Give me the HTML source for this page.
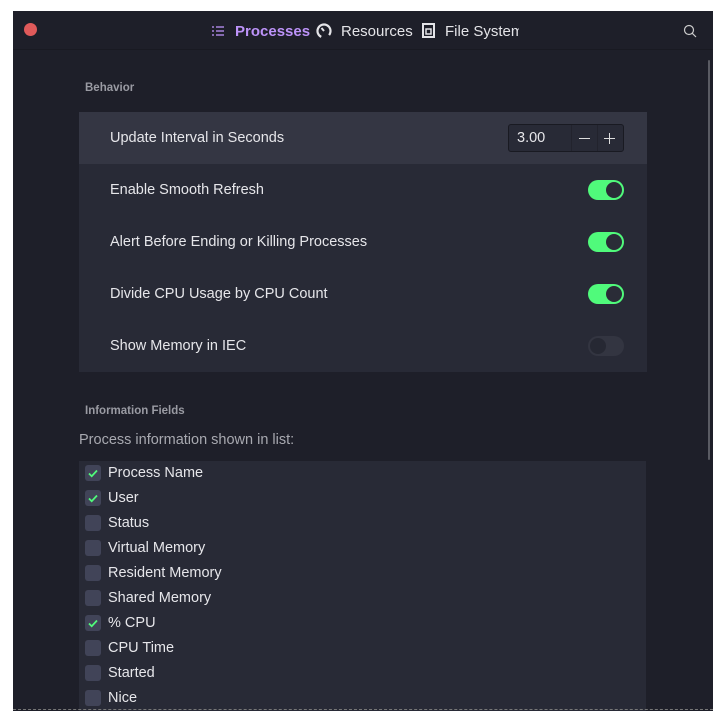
<!DOCTYPE html><html><head><style>
body{margin:0;width:726px;height:726px;background:#fff;position:relative;overflow:hidden;font-family:"Liberation Sans","DejaVu Sans",sans-serif;}
.win{position:absolute;left:13px;top:11px;width:700px;height:700px;background:#1e1f29;overflow:hidden}
.hdr{position:absolute;left:0;top:0;width:700px;height:38px;background:#1e1f29;border-bottom:1px solid #191a22}
.t{position:absolute;color:#e4e4e8;font-size:15px;white-space:nowrap}
.panel{position:absolute;left:66px;top:101px;width:568px;height:260px;background:#282a36}
.row{position:absolute;left:0;width:568px;height:52px}
.row span{position:absolute;left:31px;top:18px;font-size:14.5px;color:#e6e6ea}
.tg{position:absolute;left:509px;top:16px;width:36px;height:20px;border-radius:10px;background:#50fa7b}
.tg::after{content:"";position:absolute;right:2px;top:2px;width:16px;height:16px;border-radius:50%;background:#2a2c37}
.tg.off{background:#333541}.tg.off::after{left:2px;right:auto;background:#262833}
.list{position:absolute;left:66px;top:450px;width:567px;height:260px;background:#282a36}
.it{position:absolute;left:6px;height:25px;font-size:14.5px;color:#e6e6ea}
.cb{position:absolute;left:0;top:4px;width:16px;height:16px;border-radius:3px;background:#414458}
.cb svg{position:absolute;left:2px;top:2px}
.it span{position:absolute;left:23px;top:4px;white-space:nowrap}
</style></head><body><div class="win">
<div class="hdr">
<div style="position:absolute;left:11px;top:12px;width:13px;height:13px;border-radius:50%;background:#e05a5a"></div>
<svg style="position:absolute;left:199px;top:14px" width="12" height="12"><g stroke="#bd93f9" stroke-width="1.3"><line x1="0" y1="2" x2="2" y2="2"/><line x1="4" y1="2" x2="12" y2="2"/><line x1="0" y1="6" x2="2" y2="6"/><line x1="4" y1="6" x2="12" y2="6"/><line x1="0" y1="10" x2="2" y2="10"/><line x1="4" y1="10" x2="12" y2="10"/></g></svg>
<div class="t" style="left:222px;top:12px;color:#bd93f9;font-weight:bold">Processes</div>
<svg style="position:absolute;left:303px;top:12px" width="16" height="16"><circle cx="8" cy="8" r="6.5" fill="none" stroke="#e4e4e8" stroke-width="2.2" stroke-dasharray="32 9" transform="rotate(115 8 8)"/><line x1="8" y1="8" x2="5.5" y2="5" stroke="#e4e4e8" stroke-width="2"/></svg>
<div class="t" style="left:328px;top:12px">Resources</div>
<svg style="position:absolute;left:409px;top:12px" width="13" height="15"><rect x="1" y="1" width="11" height="13" fill="none" stroke="#e4e4e8" stroke-width="2"/><rect x="4" y="6" width="5" height="5" fill="none" stroke="#e4e4e8" stroke-width="1.5"/></svg>
<div class="t" style="left:432px;top:12px;width:74px;overflow:hidden">File System</div>
<svg style="position:absolute;left:670px;top:13px" width="14" height="14"><circle cx="6" cy="6" r="4.5" fill="none" stroke="#ccc" stroke-width="1.2"/><line x1="9.3" y1="9.3" x2="13" y2="13" stroke="#ccc" stroke-width="1.2"/></svg>
</div>
<div style="position:absolute;left:695px;top:49px;width:2px;height:400px;background:#5a5b63;border-radius:1px"></div>
<div class="t" style="left:72px;top:71px;font-size:11.5px;font-weight:bold;color:#9a9ba3">Behavior</div>
<div class="panel">
<div class="row" style="top:0;background:#343643"><span>Update Interval in Seconds</span>
<div style="position:absolute;left:429px;top:12px;width:114px;height:26px;border:1px solid #191a22;border-radius:3px;background:#282a36">
<div style="position:absolute;left:8px;top:5px;font-size:14.5px;color:#e6e6ea">3.00</div>
<div style="position:absolute;left:62px;top:0;width:1px;height:26px;background:#22232d"></div>
<div style="position:absolute;left:88px;top:0;width:1px;height:26px;background:#22232d"></div>
<div style="position:absolute;left:70px;top:13px;width:11px;height:1.3px;background:#ddd"></div>
<div style="position:absolute;left:95px;top:13px;width:11px;height:1.3px;background:#ddd"></div>
<div style="position:absolute;left:100px;top:8px;width:1.3px;height:11px;background:#ddd"></div>
</div></div>
<div class="row" style="top:52px"><span>Enable Smooth Refresh</span><div class="tg"></div></div>
<div class="row" style="top:104px"><span>Alert Before Ending or Killing Processes</span><div class="tg"></div></div>
<div class="row" style="top:156px"><span>Divide CPU Usage by CPU Count</span><div class="tg"></div></div>
<div class="row" style="top:208px"><span>Show Memory in IEC</span><div class="tg off"></div></div>
</div>
<div class="t" style="left:72px;top:394px;font-size:11.5px;font-weight:bold;color:#9a9ba3">Information Fields</div>
<div class="t" style="left:66px;top:421px;font-size:14.5px;color:#a8a9b0">Process information shown in list:</div>
<div class="list">
<div class="it" style="top:0px"><div class="cb"><svg width="12" height="12"><path d="M2 6.5l2.7 2.7L10 3.5" stroke="#50fa7b" stroke-width="1.8" fill="none"/></svg></div><span>Process Name</span></div>
<div class="it" style="top:25px"><div class="cb"><svg width="12" height="12"><path d="M2 6.5l2.7 2.7L10 3.5" stroke="#50fa7b" stroke-width="1.8" fill="none"/></svg></div><span>User</span></div>
<div class="it" style="top:50px"><div class="cb"></div><span>Status</span></div>
<div class="it" style="top:75px"><div class="cb"></div><span>Virtual Memory</span></div>
<div class="it" style="top:100px"><div class="cb"></div><span>Resident Memory</span></div>
<div class="it" style="top:125px"><div class="cb"></div><span>Shared Memory</span></div>
<div class="it" style="top:150px"><div class="cb"><svg width="12" height="12"><path d="M2 6.5l2.7 2.7L10 3.5" stroke="#50fa7b" stroke-width="1.8" fill="none"/></svg></div><span>% CPU</span></div>
<div class="it" style="top:175px"><div class="cb"></div><span>CPU Time</span></div>
<div class="it" style="top:200px"><div class="cb"></div><span>Started</span></div>
<div class="it" style="top:225px"><div class="cb"></div><span>Nice</span></div>
</div>
<div style="position:absolute;left:0;top:698px;width:700px;border-top:1px dashed #777"></div>
</div></body></html>
